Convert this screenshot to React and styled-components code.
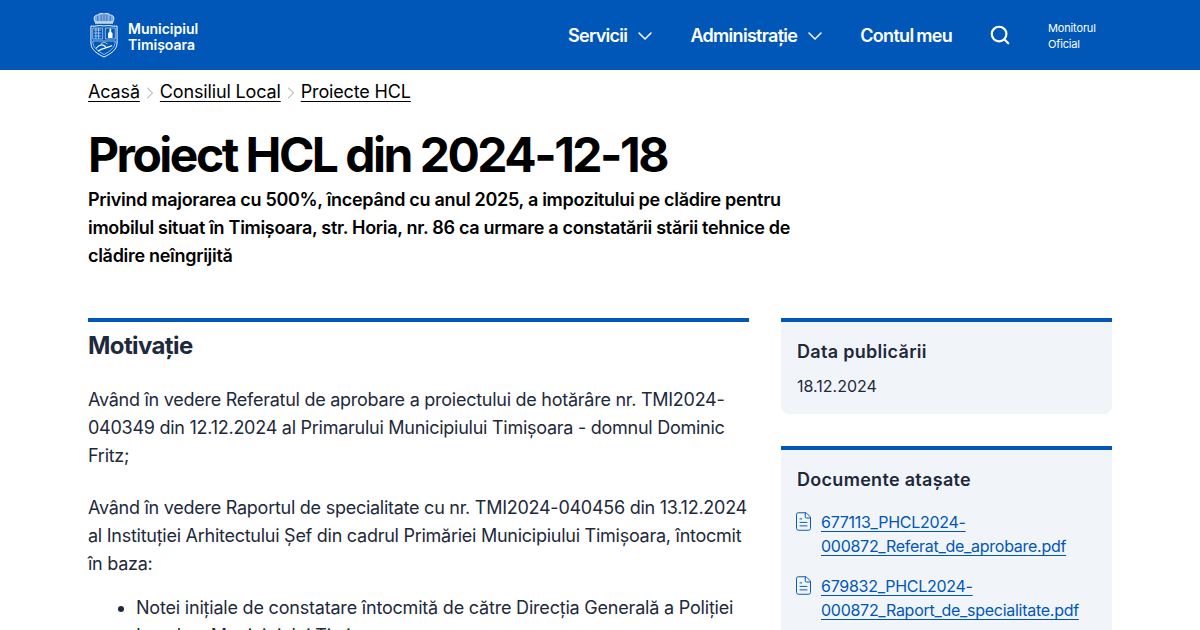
import React from "react"
import styled, { createGlobalStyle } from "styled-components"
import { ChevronDown, ChevronRight, Search, FileText } from "lucide-react"

const navItems = [
  { text: "Servicii", hasMenu: true },
  { text: "Administrație", hasMenu: true },
  { text: "Contul meu" },
]

const crumbs = ["Acasă", "Consiliul Local", "Proiecte HCL"]

const documents = [
  ["677113_PHCL2024-", "000872_Referat_de_aprobare.pdf"],
  ["679832_PHCL2024-", "000872_Raport_de_specialitate.pdf"],
]

// city coat of arms, simplified
const Logo = () => (
  <svg width="32" height="46" viewBox="0 0 32 46" fill="none" stroke="#fff" strokeWidth="1">
    <g transform="translate(1.6 0) scale(.9 1)">
      <path d="M6 10 C4 6 5 3 9 3 C11 1 14 1 16 2 C18 1 21 1 23 3 C27 3 28 6 26 10 Z" fill="#fff" fillOpacity=".5" strokeWidth=".8" />
      <path d="M9 4 V9 M13 3 V9 M16 2 V9 M19 3 V9 M23 4 V9" strokeWidth=".6" stroke="#0057b8" />
      <path d="M6 11 H26" strokeWidth="1.2" />
      <path d="M1.5 14 C6 15 10 12.5 16 14 C22 12.5 26 15 30.5 14 V31 C30.5 38 23 42 16 45 C9 42 1.5 38 1.5 31 Z" />
      <path d="M3.5 16 H14.5 V27 H3.5 Z M17.5 16 H28.5 V27 H17.5 Z" strokeWidth=".6" />
      <path d="M5 18 H13 M5 21 H13 M5 24 H13 M7 16 V27 M10 16 V27" strokeWidth=".6" />
      <path d="M20.5 26 V21 L22 20 V17.5 L23 16 L24 17.5 V20 L25.5 21 V26 Z" fill="#fff" stroke="none" />
      <path d="M3.5 29 H28.5 C28.5 36 22 39.5 16 42.5 C10 39.5 3.5 36 3.5 29 Z" strokeWidth=".6" />
      <path d="M7 36.5 C11 32 15 32 18 35 M9.5 39 C14 36 20 36 25 33.5" strokeWidth="1.1" />
      <path d="M12 32 L16 30 L20 32" strokeWidth=".7" />
    </g>
  </svg>
)

const App = () => {
  return (
    <Page>
      <GlobalStyle />
      <Header>
        <HeaderInner>
          <Brand>
            <Logo />
            <BrandName>
              Municipiul
              <br />
              Timișoara
            </BrandName>
          </Brand>
          <Nav>
            {navItems.map(item => (
              <NavItem key={item.text}>
                {item.text}
                {item.hasMenu && <ChevronDown size={24} strokeWidth={1.5} />}
              </NavItem>
            ))}
            <SearchButton aria-label="Caută">
              <Search size={22} strokeWidth={2.4} />
            </SearchButton>
            <MonitorLink>
              Monitorul
              <br />
              Oficial
            </MonitorLink>
          </Nav>
        </HeaderInner>
      </Header>

      <Container>
        <Breadcrumbs>
          {crumbs.map((crumb, index) => (
            <React.Fragment key={crumb}>
              {index > 0 && <ChevronRight size={20} strokeWidth={1.25} />}
              <Crumb href="#">{crumb}</Crumb>
            </React.Fragment>
          ))}
        </Breadcrumbs>

        <Title>Proiect HCL din 2024-12-18</Title>
        <Lede>
          Privind majorarea cu 500%, începând cu anul 2025, a impozitului pe
          clădire pentru imobilul situat în Timișoara, str. Horia, nr. 86 ca
          urmare a constatării stării tehnice de clădire neîngrijită
        </Lede>

        <Columns>
          <Main>
            <SectionTitle>Motivație</SectionTitle>
            <Paragraph>
              Având în vedere Referatul de aprobare a proiectului de hotărâre
              nr. TMI2024-040349 din 12.12.2024 al Primarului Municipiului
              Timișoara - domnul Dominic Fritz;
            </Paragraph>
            <Paragraph>
              Având în vedere Raportul de specialitate cu nr. TMI2024-040456 din
              13.12.2024 al Instituției Arhitectului Șef din cadrul Primăriei
              Municipiului Timișoara, întocmit în baza:
            </Paragraph>
            <BulletList>
              <li>
                Notei inițiale de constatare întocmită de către Direcția
                Generală a Poliției Locale a Municipiului Timișoara;
              </li>
            </BulletList>
          </Main>

          <Sidebar>
            <Card>
              <CardTitle>Data publicării</CardTitle>
              <CardText>18.12.2024</CardText>
            </Card>
            <Card>
              <CardTitle>Documente atașate</CardTitle>
              <DocumentList>
                {documents.map(lines => (
                  <DocumentRow key={lines[0]}>
                    <FileText size={21} strokeWidth={1.1} />
                    <DocumentLink href="#">
                      {lines[0]}
                      <br />
                      {lines[1]}
                    </DocumentLink>
                  </DocumentRow>
                ))}
              </DocumentList>
            </Card>
          </Sidebar>
        </Columns>
      </Container>
    </Page>
  )
}

const GlobalStyle = createGlobalStyle`
  html, body {
    margin: 0;
    height: 630px;
    overflow: hidden;
    background: #fff;
  }
  body {
    font-family: Inter, "Noto Sans", sans-serif;
  }
`

const Page = styled.div`
  height: 630px;
  overflow: hidden;
`

const Header = styled.header`
  height: 70px;
  background: #0057b8;
  color: #fff;
`

const HeaderInner = styled.div`
  width: 1024px;
  height: 100%;
  margin: 0 auto;
  display: flex;
  align-items: center;
  justify-content: space-between;
`

const Brand = styled.div`
  display: flex;
  align-items: center;
  gap: 8px;
`

const BrandName = styled.div`
  padding-top: 3px;
  font-size: 14px;
  font-weight: 600;
  line-height: 16px;
`

const Nav = styled.nav`
  display: flex;
  align-items: center;
`

const NavItem = styled.a`
  display: flex;
  align-items: center;
  gap: 6px;
  margin-right: 33px;
  font-size: 18px;
  font-weight: 600;
  letter-spacing: -0.7px;
  word-spacing: -1px;
  svg {
    margin-top: 1px;
  }
`

const SearchButton = styled.span`
  display: flex;
  margin-left: 4px;
  margin-right: 37px;
`

const MonitorLink = styled.a`
  width: 64px;
  padding-top: 1px;
  font-size: 11px;
  font-weight: 400;
  line-height: 16px;
  letter-spacing: -0.15px;
`

const Container = styled.main`
  width: 1024px;
  margin: 0 auto;
`

const Breadcrumbs = styled.nav`
  display: flex;
  align-items: center;
  height: 43px;
  font-size: 18px;
  letter-spacing: -0.15px;
  svg {
    color: #b0b0b0;
    margin-top: 2px;
  }
`

const Crumb = styled.a`
  color: #000;
  text-decoration: underline;
  text-underline-offset: 3px;
  text-decoration-thickness: 1px;
`

const Title = styled.h1`
  margin: 10px 0 0;
  font-size: 48px;
  line-height: 64px;
  font-weight: 700;
  letter-spacing: -2.52px;
  color: #000;
`

const Lede = styled.p`
  width: 720px;
  margin: -1px 0 0;
  font-size: 18px;
  line-height: 28px;
  font-weight: 600;
  letter-spacing: -0.3px;
  color: #000;
`

const Columns = styled.div`
  display: grid;
  grid-template-columns: 661px 331px;
  gap: 32px;
  margin-top: 48px;
`

const Main = styled.article`
  border-top: 4px solid #0057b8;
  color: #1e293b;
`

const SectionTitle = styled.h2`
  margin: 8px 0 0;
  font-size: 24px;
  line-height: 32px;
  font-weight: 700;
  letter-spacing: -0.6px;
`

const Paragraph = styled.p`
  margin: 24px 0 0;
  font-size: 18px;
  line-height: 28px;
  letter-spacing: -0.26px;
`

const BulletList = styled.ul`
  margin: 16px 0 0;
  padding-left: 48px;
  font-size: 18px;
  line-height: 28px;
  letter-spacing: -0.2px;
`

const Sidebar = styled.aside`
  display: flex;
  flex-direction: column;
  gap: 32px;
`

const Card = styled.section`
  padding: 16px;
  border-top: 4px solid #0057b8;
  border-radius: 0 0 8px 8px;
  background: #f1f5f9;
  color: #1e293b;
`

const CardTitle = styled.h3`
  margin: 0;
  font-size: 18px;
  line-height: 28px;
  font-weight: 600;
  letter-spacing: 0.3px;
`

const CardText = styled.p`
  margin: 8px 0 0;
  font-size: 16px;
  line-height: 24px;
`

const DocumentList = styled.ul`
  margin: 16px 0 0;
  padding: 0;
  list-style: none;
`

const DocumentRow = styled.li`
  display: flex;
  gap: 7px;
  margin-bottom: 16px;
  margin-left: -4px;
  color: #0057b8;
  svg {
    flex: none;
    margin-top: 1px;
  }
`

const DocumentLink = styled.a`
  font-size: 16px;
  line-height: 24px;
  letter-spacing: -0.27px;
  color: #0057b8;
  text-decoration: underline;
  text-underline-offset: 3px;
  text-decoration-thickness: 1px;
`

export default App
